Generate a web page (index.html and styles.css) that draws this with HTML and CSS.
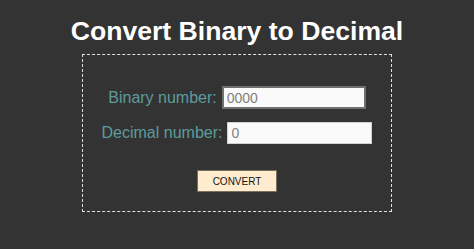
FILE: index.html
```html
<!DOCTYPE html>
<html lang="en">
<head>
  <meta charset="UTF-8">
  <meta name="viewport" content="width=device-width, initial-scale=1.0">
  <title>Convert Binary to Decimal</title>
  <link rel="stylesheet" href="styles.css">
</head>
<body>
  <h1>Convert Binary to Decimal</h1>

  <form class="converter">
    <div class="row">
      <label for="binary">Binary number:</label>
      <input type="text" id="binary" class="field field-active" value="0000">
    </div>
    <div class="row">
      <label for="decimal">Decimal number:</label>
      <input type="text" id="decimal" class="field" value="0">
    </div>
    <button type="button" class="convert">CONVERT</button>
  </form>
</body>
</html>
```

FILE: styles.css
```css
body {
  margin: 0;
  background-color: #333333;
  font-family: 'Liberation Sans', Arial, sans-serif;
}

h1 {
  margin: 16px 0 8px;
  text-align: center;
  font-size: 26.6px;
  line-height: 30px;
  color: #ffffff;
}

.converter {
  width: 308px;
  margin: 0 auto;
  padding: 31px 0 19px;
  border: 1px dashed #e0e0e0;
  display: flex;
  flex-direction: column;
  align-items: center;
}

.row {
  display: flex;
  align-items: center;
  justify-content: center;
  gap: 5px;
  margin-bottom: 13px;
}

.row label {
  font-size: 16px;
  color: #5c9c9c;
}

.field {
  box-sizing: border-box;
  width: 145px;
  height: 22px;
  padding: 1px 3px;
  border: 1px solid #d0d0d0;
  background-color: #fafafa;
  font-family: 'Liberation Sans', Arial, sans-serif;
  font-size: 14px;
  color: #808080;
}

.field-active {
  width: 144px;
  height: 23px;
  border: 2px solid #707070;
}

.convert {
  margin-top: 13px;
  width: 80px;
  height: 22px;
  border: 1px solid #7a7060;
  background-color: #ffebcd;
  font-family: 'Liberation Sans', Arial, sans-serif;
  font-size: 10px;
  color: #111111;
}
```
